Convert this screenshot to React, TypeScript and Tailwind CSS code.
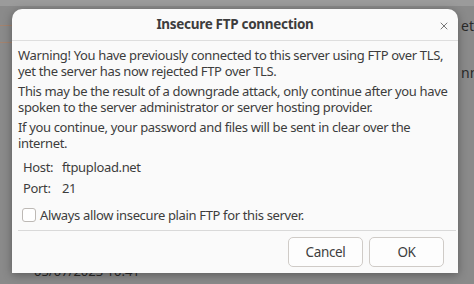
import { X } from "lucide-react";

export default function App() {
  const font = { fontFamily: "'Noto Sans', 'Open Sans', sans-serif" };

  return (
    <div className="relative w-[474px] h-[284px] overflow-hidden bg-[#8a8a8a]" style={font}>
      {/* dimmed parent window behind the dialog */}
      <div className="absolute left-0 top-0 w-full h-[6px] bg-[#9b9b9b]" />
      <div className="absolute left-0 top-[25px] w-[14px] h-px bg-[#a3836f]" />
      <div className="absolute left-0 top-[42px] w-[14px] h-px bg-[#a3836f]" />
      <div className="absolute left-[461px] top-[15px] text-[14px] text-[#2a2a2a] whitespace-nowrap">et</div>
      <div className="absolute left-[461px] top-[62px] text-[14px] text-[#2a2a2a] whitespace-nowrap">nn</div>
      <div className="absolute left-[34px] top-[262px] text-[13px] text-[#2a2a2a] whitespace-nowrap">03/07/2023 10:41</div>

      {/* dialog */}
      <div className="absolute left-[12px] top-[9px] w-[446px] h-[264px] flex flex-col bg-[#fafafa] rounded-t-[10px] shadow-[0_2px_10px_rgba(0,0,0,0.35)] text-[#3d3d3d] text-[13px] tracking-[-0.35px]">
        {/* Title bar */}
        <div className="relative h-[32px] flex items-center justify-center border-b border-[#dedede] shrink-0">
          <span className="font-bold text-[13.5px] tracking-[-0.3px]">Insecure FTP connection</span>
          <button className="absolute right-[7px] top-[10px] w-[14px] h-[14px] flex items-center justify-center text-[#555]">
            <X size={12} strokeWidth={1.6} />
          </button>
        </div>

        {/* Body */}
        <div className="flex flex-col pl-[6px] pt-[6px] leading-[16px] whitespace-nowrap">
          <p>
            Warning! You have previously connected to this server using FTP over TLS,
            <br />
            yet the server has now rejected FTP over TLS.
          </p>
          <p className="mt-[4px]">
            This may be the result of a downgrade attack, only continue after you have
            <br />
            spoken to the server administrator or server hosting provider.
          </p>
          <p className="mt-[4px]">
            If you continue, your password and files will be sent in clear over the
            <br />
            internet.
          </p>

          <div className="mt-[8px] ml-[5px] grid grid-cols-[39px_1fr] gap-y-[5px]">
            <span>Host:</span>
            <span>ftpupload.net</span>
            <span>Port:</span>
            <span>21</span>
          </div>

          <label className="mt-[11px] ml-[4px] flex items-center gap-[4px]">
            <span className="w-[14px] h-[14px] rounded-[3px] border border-[#bdb9b5] bg-white" />
            <span>Always allow insecure plain FTP for this server.</span>
          </label>
        </div>

        <div className="mt-[7px] ml-[6px] mr-[2px] h-px bg-[#d9d9d9]" />

        {/* Buttons */}
        <div className="flex justify-end gap-[6px] pt-[6px] pr-[14px]">
          <button className="w-[75px] h-[30px] rounded-[5px] border border-[#cfcbc7] bg-[#fdfdfd] text-[13.5px]">
            Cancel
          </button>
          <button className="w-[75px] h-[30px] rounded-[5px] border border-[#cfcbc7] bg-[#fdfdfd] text-[13.5px]">
            OK
          </button>
        </div>
      </div>
    </div>
  );
}
